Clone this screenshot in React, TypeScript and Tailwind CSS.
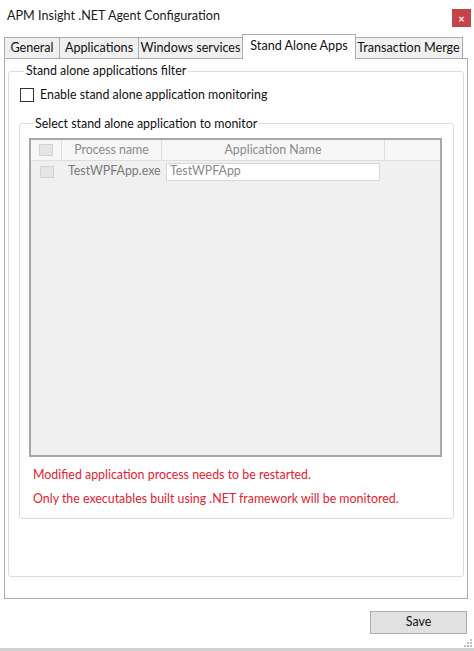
import React from "react";

const font = { fontFamily: 'Lato, "Noto Sans", sans-serif' };

function Tab({ label, selected, w }: { label: string; selected?: boolean; w: string }) {
  if (selected) {
    return (
      <div
        className={`relative z-10 -mx-[1px] -mb-[1px] flex h-[25px] items-start justify-center whitespace-nowrap border border-b-0 border-[#acacac] bg-white pt-[2px] text-[12.6px] text-[#111] ${w}`}
      >
        {label}
      </div>
    );
  }
  return (
    <div
      className={`flex h-[21px] items-center justify-center whitespace-nowrap border border-b-0 border-l-0 border-[#acacac] bg-[#f0f0f0] text-[12.6px] text-[#111] first:border-l ${w}`}
    >
      {label}
    </div>
  );
}

function GrayCheck() {
  return <div className="h-[12px] w-[14px] border border-[#d2d2d2] bg-[#e6e6e6]" />;
}

export default function App() {
  return (
    <div className="relative flex h-[651px] w-[474px] flex-col overflow-hidden bg-white" style={font}>
      {/* Title bar */}
      <div className="flex h-[34px] items-start justify-between pl-[7px] pr-[3px]">
        <div className="whitespace-nowrap pt-[7px] text-[12.6px] text-[#1a1a1a]">APM Insight .NET Agent Configuration</div>
        <div className="mt-[9px] flex h-[18px] w-[19px] items-center justify-center bg-[#c8424a] text-[11px] font-bold leading-none text-white">
          ×
        </div>
      </div>

      {/* Tab strip */}
      <div className="flex h-[24px] items-end pl-[4px]">
        <Tab label="General" w="w-[56px]" />
        <Tab label="Applications" w="w-[79px]" />
        <Tab label="Windows services" w="w-[104px]" />
        <Tab label="Stand Alone Apps" w="w-[114px]" selected />
        <Tab label="Transaction Merge" w="w-[108px]" />
      </div>

      {/* Content panel */}
      <div className="ml-[4px] flex h-[541px] w-[464px] flex-col border border-[#acacac] bg-white px-[3px] pt-[2px]">
        <fieldset className="h-[516px] rounded-[3px] border border-[#dcdcdc] pl-[10px] pr-[9px]">
          <legend className="ml-[5px] whitespace-nowrap px-[2px] text-[12.4px] leading-[20px] text-[#111]">
            Stand alone applications filter
          </legend>
          <div className="mt-[5px] flex items-center gap-[6px] pl-[1px]">
            <div className="h-[14px] w-[14px] border border-[#333] bg-white" />
            <span className="whitespace-nowrap text-[12.4px] text-[#111]">Enable stand alone application monitoring</span>
          </div>

          <fieldset className="mt-[9px] h-[405px] rounded-[3px] border border-[#dcdcdc] pl-[9px] pr-[11px]">
            <legend className="ml-[4px] whitespace-nowrap px-[2px] text-[12.4px] leading-[20px] text-[#111]">
              Select stand alone application to monitor
            </legend>
            {/* Data grid */}
            <div className="mt-[4px] h-[319px] border-2 border-[#a7a7a7] bg-[#f0f0f0]">
              <div className="flex h-[21px] border-b border-[#dedede] bg-[#f7f7f7] text-[12.4px] text-[#8a8a8a]">
                <div className="flex w-[31px] items-center justify-center border-r border-[#dedede]">
                  <GrayCheck />
                </div>
                <div className="flex w-[100px] items-center justify-center whitespace-nowrap border-r border-[#dedede] pt-[2px]">
                  Process name
                </div>
                <div className="flex w-[223px] items-center justify-center whitespace-nowrap border-r border-[#dedede] pt-[2px]">
                  Application Name
                </div>
                <div className="flex-1" />
              </div>
              <div className="flex h-[22px] items-center text-[12.4px] text-[#7a7a7a]">
                <div className="flex w-[31px] items-center justify-center">
                  <GrayCheck />
                </div>
                <div className="w-[104px] whitespace-nowrap pl-[6px]">TestWPFApp.exe</div>
                <div className="flex h-[18px] w-[214px] items-center whitespace-nowrap border border-[#d9d9d9] bg-white pl-[3px] text-[#8a8a8a]">
                  TestWPFApp
                </div>
              </div>
            </div>
            <div className="mt-[6px] whitespace-nowrap pl-[4px] text-[12.4px] leading-[24px] text-[#e5212f]">
              <div>Modified application process needs to be restarted.</div>
              <div>Only the executables built using .NET framework will be monitored.</div>
            </div>
          </fieldset>
        </fieldset>
      </div>

      {/* Footer */}
      <div className="flex flex-1 items-start justify-end pr-[7px] pt-[12px]">
        <div className="flex h-[23px] w-[97px] items-center justify-center border border-[#adadad] bg-[#e1e1e1] text-[12.4px] text-[#111]">
          Save
        </div>
      </div>
      <div className="h-[3px] bg-[#d2d2d2]" />
      <div className="absolute bottom-[4px] right-[2px] grid grid-cols-3 gap-[1px]">
        {[0, 1, 2, 3, 4, 5, 6, 7, 8].map((i) => (
          <div
            key={i}
            className={`h-[2px] w-[2px] ${[2, 4, 5, 6, 7, 8].includes(i) ? "bg-[#c0c0c0]" : "bg-transparent"}`}
          />
        ))}
      </div>
    </div>
  );
}
